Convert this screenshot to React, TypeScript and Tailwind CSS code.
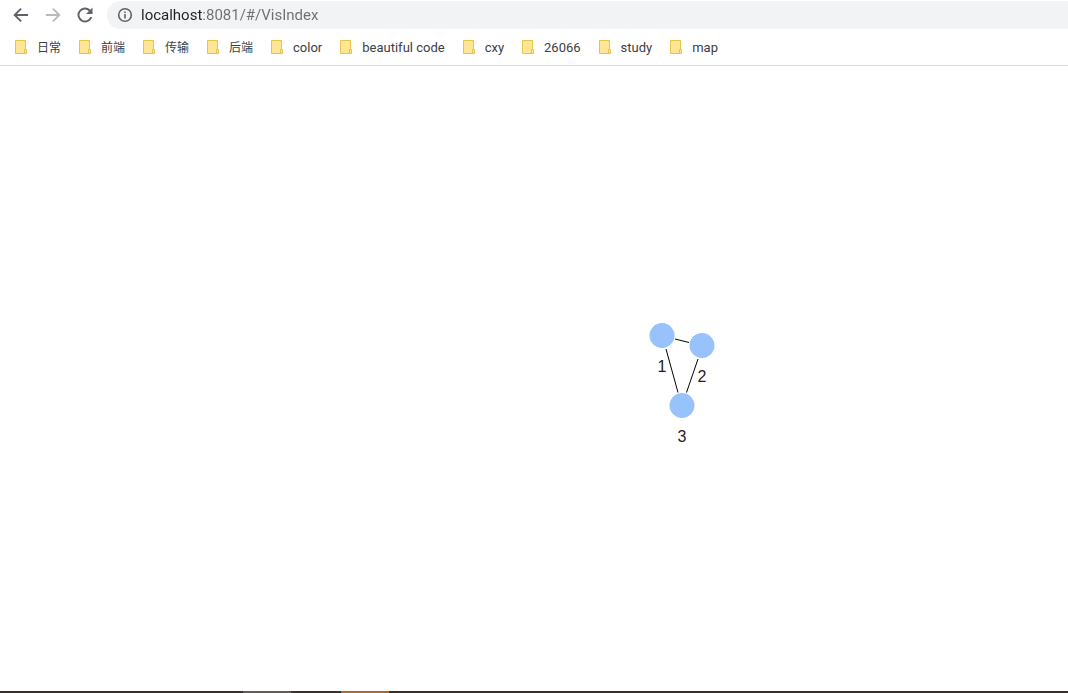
import { ReactNode } from "react";

const bookmarks = ["日常", "前端", "传输", "后端", "color", "beautiful code", "cxy", "26066", "study", "map"];

const nodes = [
  { id: 1, x: 20, y: 24.5 },
  { id: 2, x: 60, y: 34.5 },
  { id: 3, x: 40, y: 94.5 },
];

const edges = [
  { x1: 33, y1: 28, x2: 47, y2: 31.5 },
  { x1: 24, y1: 38, x2: 36, y2: 81.5 },
  { x1: 56, y1: 48, x2: 44.5, y2: 81.5 },
];

function ToolButton({ label, disabled, children }: { label: string; disabled?: boolean; children: ReactNode }) {
  return (
    <button aria-label={label} disabled={disabled} className="text-[#5f6368] disabled:text-[#bababa]">
      <svg width="20" height="20" viewBox="0 0 24 24" fill="currentColor">
        {children}
      </svg>
    </button>
  );
}

function FolderIcon() {
  return (
    <svg width="12" height="14" viewBox="0 0 12 14" fill="#ffe694" stroke="#e8c34a" className="shrink-0">
      <path d="M.5.5h10v13H.5z" />
      <path d="M9.5 9.5h2v4h-2z" />
    </svg>
  );
}

function Toolbar() {
  return (
    <div className="flex items-center gap-3 pt-px pl-[11px]">
      <ToolButton label="Back">
        <path d="M20.5 10.8H7.2l5.7-5.7L11.3 3.5 2.8 12l8.5 8.5 1.6-1.6-5.7-5.7h13.3z" />
      </ToolButton>
      <ToolButton label="Forward" disabled>
        <path d="M3.5 10.8h13.3l-5.7-5.7 1.6-1.6 8.5 8.5-8.5 8.5-1.6-1.6 5.7-5.7H3.5z" />
      </ToolButton>
      <ToolButton label="Reload">
        <path d="M18.4 5.6A9 9 0 1 0 20.7 14.3h-2.5A6.6 6.6 0 1 1 16.6 7.4L13.2 10.8H21V3z" />
      </ToolButton>
      <div className="flex h-7 flex-1 items-center gap-2 rounded-l-full bg-[#f1f3f4] pl-[10px]">
        <svg width="16" height="16" viewBox="0 0 16 16" fill="none" stroke="#5f6368" strokeWidth="1.6" className="shrink-0">
          <circle cx="8" cy="8" r="6.3" />
          <path d="M8 7v4.5M8 4.4v1.7" />
        </svg>
        <input
          aria-label="Address"
          defaultValue="localhost:8081/#/VisIndex"
          className="min-w-0 flex-1 bg-[linear-gradient(to_right,#202124_61px,#6b6f73_61px)] bg-clip-text text-[15px] leading-5 text-transparent outline-none"
        />
      </div>
    </div>
  );
}

function BookmarkBar() {
  return (
    <nav className="flex h-[37px] items-center gap-[18px] overflow-hidden border-b border-[#dadce0] pl-[15px]">
      {bookmarks.map((name) => (
        <a key={name} href="#" className="flex shrink-0 items-center gap-[10px] text-[13px] leading-5 text-[#3c4043]">
          <FolderIcon />
          <span className={/[a-z0-9]/.test(name) ? "pt-0.5" : "pt-0.5 text-xs leading-5"}>{name}</span>
        </a>
      ))}
    </nav>
  );
}

function Graph() {
  return (
    <svg width="80" height="136" viewBox="0 0 80 136" role="img" aria-label="Network">
      {edges.map((e, i) => (
        <line key={i} {...e} stroke="#000" />
      ))}
      {nodes.map((n) => (
        <g key={n.id}>
          <circle cx={n.x} cy={n.y} r="12.5" fill="#97c2fc" />
          <text x={n.x} y={n.y + 36.5} textAnchor="middle" className="fill-[#222] font-['Liberation_Sans',sans-serif] text-base">
            {n.id}
          </text>
        </g>
      ))}
    </svg>
  );
}

export default function App() {
  return (
    <div className="flex min-h-screen flex-col bg-white font-[Roboto,'Noto_Sans_CJK_SC',sans-serif]">
      <header>
        <Toolbar />
        <BookmarkBar />
      </header>
      <main className="flex flex-1 items-center justify-center pl-[296px]">
        <Graph />
      </main>
      <footer className="flex h-0.5 bg-[#3a3226]">
        <div className="ml-[243px] w-12 bg-[#655e56]" />
        <div className="ml-[50px] w-12 bg-[#b06a28]" />
      </footer>
    </div>
  );
}
